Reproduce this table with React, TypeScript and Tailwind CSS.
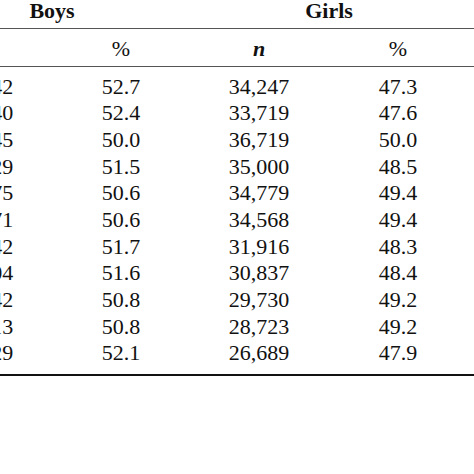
import React from "react";

const rows: [string, string, string, string][] = [
  ["38,142", "52.7", "34,247", "47.3"],
  ["37,140", "52.4", "33,719", "47.6"],
  ["36,745", "50.0", "36,719", "50.0"],
  ["37,129", "51.5", "35,000", "48.5"],
  ["35,575", "50.6", "34,779", "49.4"],
  ["35,371", "50.6", "34,568", "49.4"],
  ["34,142", "51.7", "31,916", "48.3"],
  ["32,904", "51.6", "30,837", "48.4"],
  ["30,742", "50.8", "29,730", "49.2"],
  ["29,713", "50.8", "28,723", "49.2"],
  ["29,029", "52.1", "26,689", "47.9"],
];

export default function App() {
  return (
    <div
      className="w-[474px] h-[474px] bg-white overflow-hidden text-[#111]"
      style={{ fontFamily: '"Liberation Serif", "Times New Roman", serif' }}
    >
      <div className="w-[474px]">
        {/* top group header */}
        <div className="h-[28px] border-b border-[#555] box-content">
          <div className="-ml-[86px] w-[554px] grid grid-cols-[276px_278px] text-[22px] leading-[22px] font-bold">
            <div className="text-center">Boys</div>
            <div className="text-center">Girls</div>
          </div>
        </div>
        {/* sub header */}
        <div className="h-[28px] pt-[9px] border-b border-[#555] box-content">
          <div className="-ml-[86px] w-[554px] grid grid-cols-[138px_138px_138px_140px] text-[22px] leading-[22px]">
            <div className="text-center font-bold italic">n</div>
            <div className="text-center">%</div>
            <div className="text-center font-bold italic">n</div>
            <div className="text-center">%</div>
          </div>
        </div>
        {/* body */}
        <div className="pt-[6.5px] pb-[7px] border-b-2 border-[#111]">
          {rows.map((r, i) => (
            <div
              key={i}
              className="-ml-[86px] w-[554px] grid grid-cols-[138px_138px_138px_140px] text-[22px] leading-[26.7px] h-[26.7px]"
            >
              {r.map((c, j) => (
                <div key={j} className="text-center">
                  {c}
                </div>
              ))}
            </div>
          ))}
        </div>
      </div>
    </div>
  );
}
